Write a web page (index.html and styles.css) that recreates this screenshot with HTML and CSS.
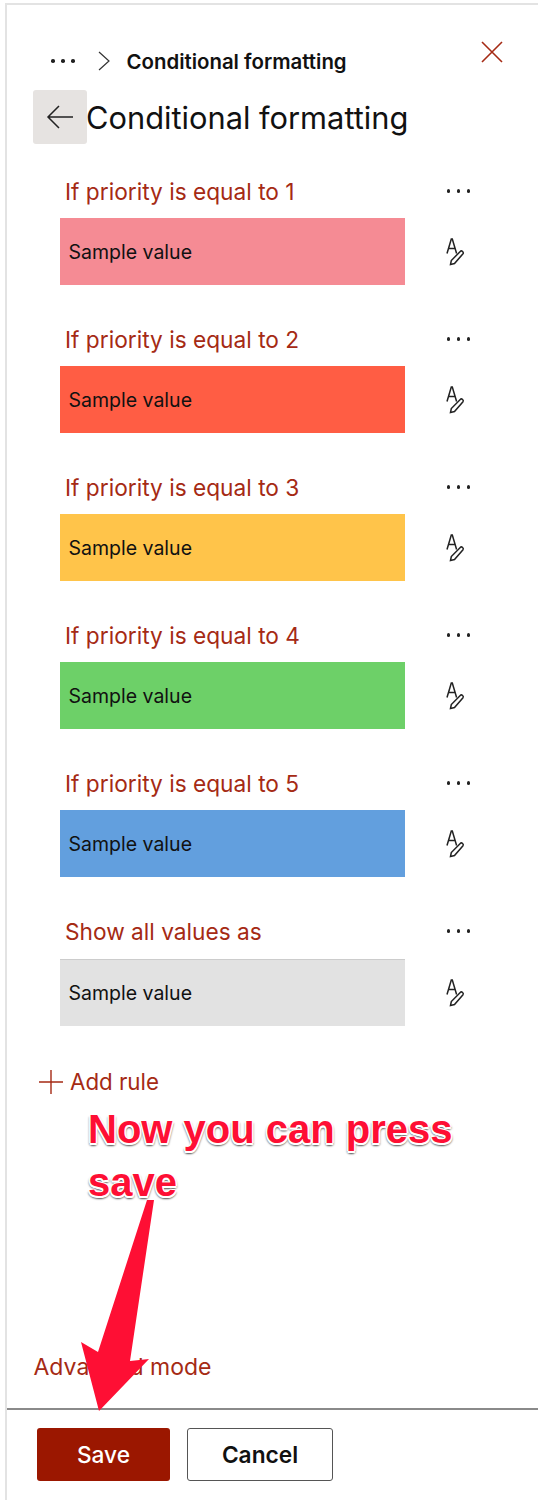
FILE: index.html
```html
<!DOCTYPE html>
<html lang="en">
<head>
<meta charset="utf-8">
<title>Conditional formatting</title>
<link rel="stylesheet" href="styles.css">
</head>
<body>
<div class="panel">
  <div class="scroll">
    <div class="crumbs">
      <span class="dots dots-crumb"><i></i><i></i><i></i></span>
      <svg class="chev" viewBox="0 0 14 20" width="14" height="20"><path d="M2 1l10 9-10 9" fill="none" stroke="#333" stroke-width="1.2"/></svg>
      <span class="crumb-text">Conditional formatting</span>
      <svg class="close" viewBox="0 0 22 22" width="22" height="22"><path d="M1 1l20 20M21 1L1 21" fill="none" stroke="#a52a14" stroke-width="1.6"/></svg>
    </div>
    <div class="title-row">
      <span class="back"><svg viewBox="0 0 28 24" width="28" height="24"><path d="M27 12H2M13 1L2 12l11 11" fill="none" stroke="#222" stroke-width="1.5"/></svg></span>
      <h1>Conditional formatting</h1>
    </div>
    <div class="rules">
      <div class="rule">
        <div class="rule-head"><span class="rule-label">If priority is equal to 1</span><span class="dots"><i></i><i></i><i></i></span></div>
        <div class="rule-body"><div class="sample c1">Sample value</div><svg class="fmt" viewBox="0 0 22 28" width="22" height="28"><use href="#fmt-icon"/></svg></div>
      </div>
      <div class="rule">
        <div class="rule-head"><span class="rule-label">If priority is equal to 2</span><span class="dots"><i></i><i></i><i></i></span></div>
        <div class="rule-body"><div class="sample c2">Sample value</div><svg class="fmt" viewBox="0 0 22 28" width="22" height="28"><use href="#fmt-icon"/></svg></div>
      </div>
      <div class="rule">
        <div class="rule-head"><span class="rule-label">If priority is equal to 3</span><span class="dots"><i></i><i></i><i></i></span></div>
        <div class="rule-body"><div class="sample c3">Sample value</div><svg class="fmt" viewBox="0 0 22 28" width="22" height="28"><use href="#fmt-icon"/></svg></div>
      </div>
      <div class="rule">
        <div class="rule-head"><span class="rule-label">If priority is equal to 4</span><span class="dots"><i></i><i></i><i></i></span></div>
        <div class="rule-body"><div class="sample c4">Sample value</div><svg class="fmt" viewBox="0 0 22 28" width="22" height="28"><use href="#fmt-icon"/></svg></div>
      </div>
      <div class="rule">
        <div class="rule-head"><span class="rule-label">If priority is equal to 5</span><span class="dots"><i></i><i></i><i></i></span></div>
        <div class="rule-body"><div class="sample c5">Sample value</div><svg class="fmt" viewBox="0 0 22 28" width="22" height="28"><use href="#fmt-icon"/></svg></div>
      </div>
      <div class="rule">
        <div class="rule-head"><span class="rule-label">Show all values as</span><span class="dots"><i></i><i></i><i></i></span></div>
        <div class="rule-body rule-body-last"><div class="sample c6">Sample value</div><svg class="fmt" viewBox="0 0 22 28" width="22" height="28"><use href="#fmt-icon"/></svg></div>
      </div>
    </div>
    <div class="add-rule">
      <svg viewBox="0 0 24 24" width="24" height="24"><path d="M12 0v24M0 12h24" fill="none" stroke="#a52a14" stroke-width="1.4"/></svg>
      <span>Add rule</span>
    </div>
    <div class="advanced">Advanced mode</div>
  </div>
  <div class="footer">
    <button class="btn btn-save">Save</button>
    <button class="btn btn-cancel">Cancel</button>
  </div>
</div>
<div class="note">Now you can press<br>save</div>
<svg class="arrow" viewBox="0 0 538 1500" width="538" height="1500"><polygon points="147,1200 154,1200 130,1361 149,1359 99,1411 81,1342 98,1352" fill="#fe0f34"/></svg>
<svg class="defs" width="0" height="0"><defs><g id="fmt-icon"><path d="M3 15.500L7.300 1h1l4.300 14.500M4.500 10.500h6.500" fill="none" stroke="#222" stroke-width="1.500"/><path d="M6.500 26.500l.8-4 9.200-9.300c1.200-1 3.500 1.200 2.500 2.500l-8.500 9.800z" fill="none" stroke="#222" stroke-width="1.500"/></g></defs></svg>
</body>
</html>
```
FILE: styles.css
```css
* { box-sizing: border-box; }
html, body { margin: 0; padding: 0; }
body {
  width: 538px;
  height: 1500px;
  position: relative;
  overflow: hidden;
  background: #fff;
  font-family: Inter, "Liberation Sans", sans-serif;
  color: #111;
  padding-top: 3px;
}
.panel {
  height: 1497px;
  border-top: 2px solid #e3e3e3;
  margin-left: 5px;
  border-left: 2px solid #e3e3e3;
  display: flex;
  flex-direction: column;
}
.scroll { flex: 1; display: flex; flex-direction: column; position: relative; }
.crumbs {
  display: flex;
  align-items: center;
  height: 24px;
  margin-top: 44px;
  padding-left: 44px;
  padding-right: 35px;
}
.dots { display: inline-flex; gap: 6.500px; align-items: center; }
.dots i { width: 3.500px; height: 3.500px; border-radius: 50%; background: #222; display: block; }
.chev { margin-left: 22px; }
.crumb-text { margin-left: 16px; font-size: 20.400px; font-weight: 600; color: #111; }
.close { margin-left: auto; margin-top: -19px; }
.title-row { display: flex; align-items: center; margin-top: 17px; padding-left: 26px; }
.back {
  width: 54px;
  height: 54px;
  background: #e6e3e1;
  border-radius: 3px;
  display: flex;
  align-items: center;
  justify-content: center;
}
h1 { margin: 1px 0 0 -1px; font-size: 30.800px; font-weight: 400; color: #111; }
.rules { display: flex; flex-direction: column; gap: 42px; margin-top: 35px; padding-left: 53px; }
.rule-head { display: flex; align-items: center; height: 24px; width: 410px; justify-content: space-between; padding-left: 5px; }
.rule-label { font-size: 22.700px; color: #a52a14; }
.rule-body { display: flex; align-items: center; margin-top: 15px; }
.rule-body-last { margin-top: 16px; }
.sample {
  width: 345px;
  height: 67px;
  display: flex;
  align-items: center;
  padding-left: 8.500px;
  font-size: 19.500px;
  color: #111;
}
.c1 { background: #f58b94; }
.c2 { background: #ff5d44; }
.c3 { background: #ffc44a; }
.c4 { background: #6dd068; }
.c5 { background: #629fde; }
.c6 { background: #e2e2e2; border-top: 1px solid #ccc; }
.fmt { margin-left: 39px; }
.add-rule { display: flex; align-items: center; gap: 7px; margin-top: 42px; padding-left: 32px; font-size: 22.300px; color: #a52a14; }
.advanced { margin-top: auto; margin-bottom: 27px; padding-left: 26.500px; font-size: 23px; color: #a52a14; }
.footer {
  height: 92px;
  border-top: 2px solid #8a8a8a;
  display: flex;
  align-items: flex-start;
  gap: 17px;
  padding: 18px 0 0 30px;
}
.btn { height: 53px; border-radius: 3px; font-family: inherit; font-size: 22.700px; font-weight: 600; }
.btn-save { width: 133px; background: #9b1700; border: 0; color: #fff; font-weight: 500; }
.btn-cancel { width: 146px; background: #fff; border: 1.500px solid #555; color: #111; }
.note {
  position: absolute;
  left: 88px;
  top: 1103px;
  font-family: "Liberation Sans", sans-serif;
  font-weight: 700;
  font-size: 40px;
  line-height: 53px;
  color: #fe0f34;
  text-shadow: 1.500px 0 0 #fff, -1.500px 0 0 #fff, 0 -1.500px 0 #fff, 1px 2px 0 #fff, -1px 2px 0 #fff, 0 3px 2px rgba(0,0,0,.55), 1.500px 2px 2px rgba(0,0,0,.4), -1.500px 2px 2px rgba(0,0,0,.4);
}
.arrow { position: absolute; left: 0; top: 0; pointer-events: none; }
.defs { position: absolute; }
```
